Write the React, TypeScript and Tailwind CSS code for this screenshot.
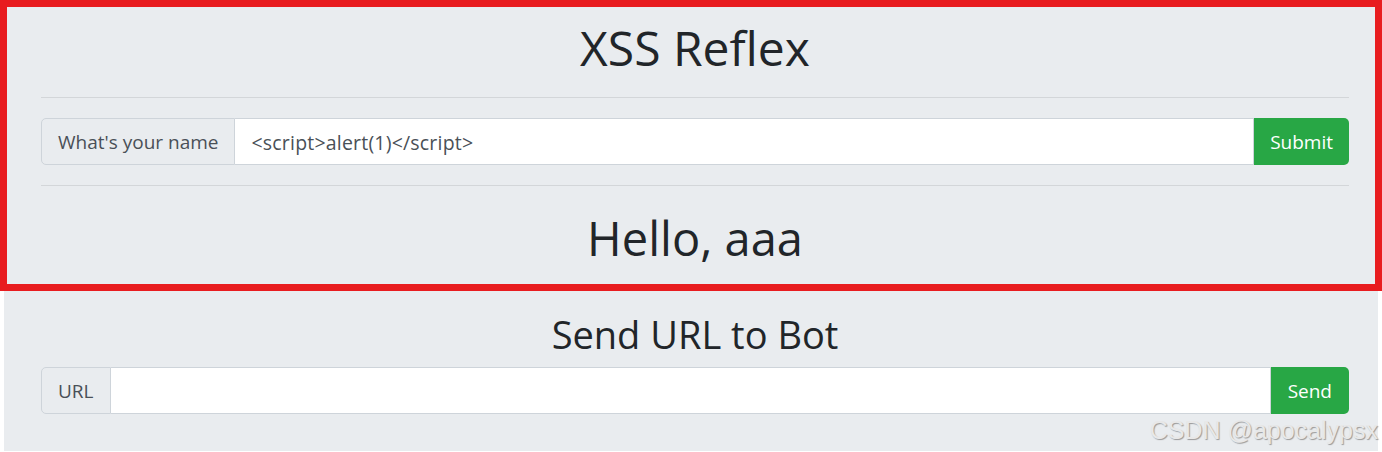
export default function App() {
  const font = { fontFamily: '"Segoe UI", "Open Sans", "Noto Sans", sans-serif' };
  return (
    <div className="relative w-[1382px] h-[452px] bg-white overflow-hidden" style={font}>
      <div className="ml-[4px] w-[1374px] h-[451px] bg-[#e9ecef]">
        <div className="ml-[37px] w-[1308px] flex flex-col">
          <h1 className="mt-[18px] h-[60px] leading-[60px] text-center text-[48px] text-[#212529]">XSS Reflex</h1>
          <hr className="mt-[19px] border-t border-[#d3d6d9]" />
          <div className="mt-[20px] flex h-[47px]">
            <span className="flex items-center pt-[2px] px-[16px] bg-[#e9ecef] border border-[#ced4da] rounded-l-[5px] text-[19px] text-[#495057]">
              What's your name
            </span>
            <input
              defaultValue="<script>alert(1)</script>"
              className="flex-1 pt-[3px] px-[16px] bg-white border border-l-0 border-[#ced4da] text-[19.5px] tracking-[0.2px] text-[#495057] outline-none"
            />
            <button className="pt-[2px] px-[16px] bg-[#28a745] rounded-r-[5px] text-[19px] text-white">Submit</button>
          </div>
          <hr className="mt-[20px] border-t border-[#d3d6d9]" />
          <h1 className="mt-[22px] h-[60px] leading-[60px] text-center text-[47px] text-[#212529]">Hello, aaa</h1>
          <h2 className="mt-[42px] h-[48px] leading-[48px] text-center text-[38px] text-[#212529]">Send URL to Bot</h2>
          <div className="mt-[9px] flex h-[47px]">
            <span className="flex items-center pt-[2px] px-[16px] bg-[#e9ecef] border border-[#ced4da] rounded-l-[5px] text-[19px] text-[#495057]">
              URL
            </span>
            <input className="flex-1 px-[16px] bg-white border border-l-0 border-[#ced4da] text-[20px] text-[#495057] outline-none" />
            <button className="pt-[2px] px-[17px] bg-[#28a745] rounded-r-[5px] text-[19px] text-white">Send</button>
          </div>
        </div>
      </div>

      {/* annotation box */}
      <div className="pointer-events-none absolute left-0 top-0 w-[1382px] h-[291px] border-[7px] border-[#e81c1f]" />

      {/* watermark */}
      <div
        className="absolute right-[4px] top-[415px] text-[25px] leading-[30px] text-[#e8e8e8] [text-shadow:1px_1px_1px_#9a9a9a]"
        style={{ fontFamily: '"Liberation Sans", Arial, sans-serif' }}
      >
        CSDN @apocalypsx
      </div>
    </div>
  );
}
